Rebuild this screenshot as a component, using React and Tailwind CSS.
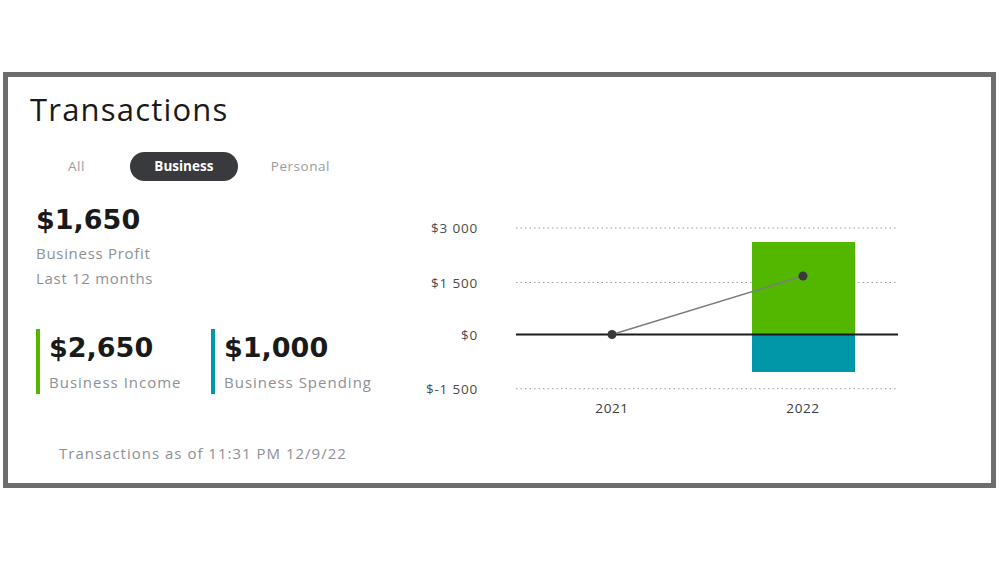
import React from "react";

const font = { fontFamily: "'Open Sans', 'Noto Sans', sans-serif" };
const num = { fontFamily: "'DejaVu Sans', 'Open Sans', sans-serif" };

const Stat = ({ color, amount, label, width }) => (
  <div className={`flex items-stretch ${width}`}>
    <div className={`w-[4px] ${color}`} />
    <div className="pl-[9px] pt-[2px] pb-[2px]">
      <div className="text-[27px] leading-[34px] font-bold text-[#1a1a1a]" style={num}>{amount}</div>
      <div className="mt-[7px] text-[15px] leading-[20px] tracking-[1px] text-[#8d9096]">{label}</div>
    </div>
  </div>
);

const Chart = () => {
  const labels = [
    { t: "$3 000", y: 17 },
    { t: "$1 500", y: 71.5 },
    { t: "$0", y: 123.5 },
    { t: "$-1 500", y: 177.7 },
  ];
  return (
    <svg width="500" height="215" className="block">
      {labels.map((l) => (
        <text key={l.t} x="68" y={l.y + 5} textAnchor="end" fontSize="13.5" letterSpacing="0.8" fill="#4a4a4a" style={font}>
          {l.t}
        </text>
      ))}
      {[17, 71.5, 177.7].map((y) => (
        <line key={y} x1="106" x2="488" y1={y} y2={y} stroke="#9a9a9a" strokeWidth="1" strokeDasharray="1.5 3" />
      ))}
      <rect x="342" y="31" width="103" height="92.5" fill="#53b700" />
      <rect x="342" y="123.5" width="103" height="37.5" fill="#0098a8" />
      <line x1="106" x2="488" y1="123.5" y2="123.5" stroke="#1a1a1a" strokeWidth="2" />
      <line x1="202" y1="123.5" x2="393" y2="65" stroke="#7c7c7c" strokeWidth="1.5" />
      <circle cx="202" cy="123.5" r="4.5" fill="#393a3d" />
      <circle cx="393" cy="65" r="4.5" fill="#393a3d" />
      <text x="202" y="202" textAnchor="middle" fontSize="13.5" letterSpacing="0.6" fill="#393a3d" style={font}>2021</text>
      <text x="393" y="202" textAnchor="middle" fontSize="13.5" letterSpacing="0.6" fill="#393a3d" style={font}>2022</text>
    </svg>
  );
};

export default function App() {
  return (
    <div className="w-[999px] h-[562px] bg-white pt-[72px] pl-[3px]" style={font}>
      <div className="w-[993px] h-[416px] border-[5px] border-[#6d6d6d] bg-white flex flex-col">
        <h1 className="ml-[22px] mt-[13px] text-[31px] leading-[38px] tracking-[1.2px] text-[#1a1a1a] font-normal">Transactions</h1>
        <div className="mt-[24px] flex items-center h-[29px] ml-[60px] text-[13.5px] tracking-[0.5px]">
          <span className="text-[#9b9b9b]">All</span>
          <span className="ml-[45px] w-[108px] h-[29px] rounded-full bg-[#393a3d] text-white font-bold tracking-[0px] flex items-center justify-center">
            Business
          </span>
          <span className="ml-[33px] text-[#9b9b9b]">Personal</span>
        </div>
        <div className="flex">
          <div className="w-[397px] pl-[28px] pt-[22px]">
            <div className="text-[27px] leading-[34px] font-bold text-[#1a1a1a]" style={num}>$1,650</div>
            <div className="mt-[4px] text-[15px] leading-[25px] tracking-[0.7px] text-[#8d9096]">Business Profit</div>
            <div className="text-[15px] leading-[25px] tracking-[0.7px] text-[#8d9096]">Last 12 months</div>
            <div className="mt-[38px] flex">
              <Stat width="w-[175px]" color="bg-[#53b700]" amount="$2,650" label="Business Income" />
              <Stat color="bg-[#0098a8]" amount="$1,000" label="Business Spending" />
            </div>
            <div className="mt-[48px] ml-[23px] text-[15px] tracking-[1px] text-[#8d9096]">Transactions as of 11:31 PM 12/9/22</div>
          </div>
          <div className="mt-[30px] ml-[5px]">
            <Chart />
          </div>
        </div>
      </div>
    </div>
  );
}
